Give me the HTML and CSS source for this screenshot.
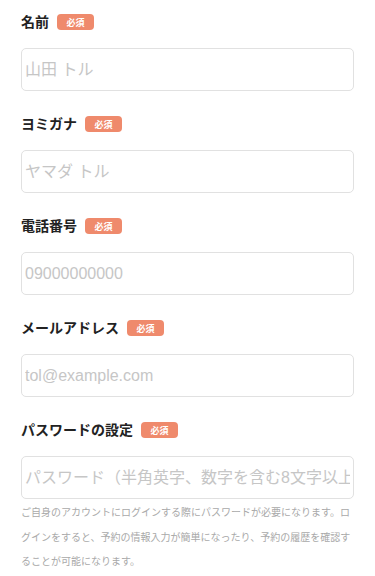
FILE: index.html
```html
<!DOCTYPE html>
<html lang="ja">
<head>
<meta charset="utf-8">
<link rel="stylesheet" href="styles.css">
</head>
<body>
<form class="form">
  <div class="field">
    <div class="label-row"><span class="label">名前</span><span class="badge">必須</span></div>
    <input class="input" type="text" placeholder="山田 トル">
  </div>
  <div class="field">
    <div class="label-row"><span class="label">ヨミガナ</span><span class="badge">必須</span></div>
    <input class="input" type="text" placeholder="ヤマダ トル">
  </div>
  <div class="field">
    <div class="label-row"><span class="label">電話番号</span><span class="badge">必須</span></div>
    <input class="input" type="text" placeholder="09000000000">
  </div>
  <div class="field">
    <div class="label-row"><span class="label">メールアドレス</span><span class="badge">必須</span></div>
    <input class="input" type="text" placeholder="tol@example.com">
  </div>
  <div class="field">
    <div class="label-row"><span class="label">パスワードの設定</span><span class="badge">必須</span></div>
    <input class="input" type="password" placeholder="パスワード（半角英字、数字を含む8文字以上）">
    <p class="help">ご自身のアカウントにログインする際にパスワードが必要になります。ログインをすると、予約の情報入力が簡単になったり、予約の履歴を確認することが可能になります。</p>
  </div>
</form>
</body>
</html>
```
FILE: styles.css
```css
* { box-sizing: border-box; }
html, body { margin: 0; padding: 0; background: #fff; }
body {
  font-family: "Liberation Sans", "Noto Sans CJK JP", sans-serif;
  color: #222;
}
.form {
  padding: 12px 21px 0 21px;
  display: flex;
  flex-direction: column;
  gap: 23px;
}
.field {
  display: flex;
  flex-direction: column;
}
.label-row {
  display: flex;
  align-items: center;
  gap: 8px;
  height: 20px;
  margin-bottom: 16px;
}
.label {
  font-size: 14px;
  font-weight: bold;
  line-height: 20px;
}
.badge {
  display: inline-flex;
  align-items: center;
  justify-content: center;
  width: 37px;
  height: 16px;
  border-radius: 4px;
  background: #ef8a6c;
  color: #fff;
  font-size: 9px;
  font-weight: bold;
}
.input {
  width: 100%;
  height: 43px;
  border: 1px solid #e1e1e1;
  border-radius: 5px;
  padding: 0 3px;
  font-family: "Liberation Sans", "Noto Sans CJK JP", sans-serif;
  font-size: 16px;
  color: #222;
  background: #fff;
  outline: none;
}
.input::placeholder { color: #c6c6c6; }
.help {
  margin: 2px 0 0 0;
  font-size: 10px;
  line-height: 24.5px;
  color: #a9a9a9;
}
```
